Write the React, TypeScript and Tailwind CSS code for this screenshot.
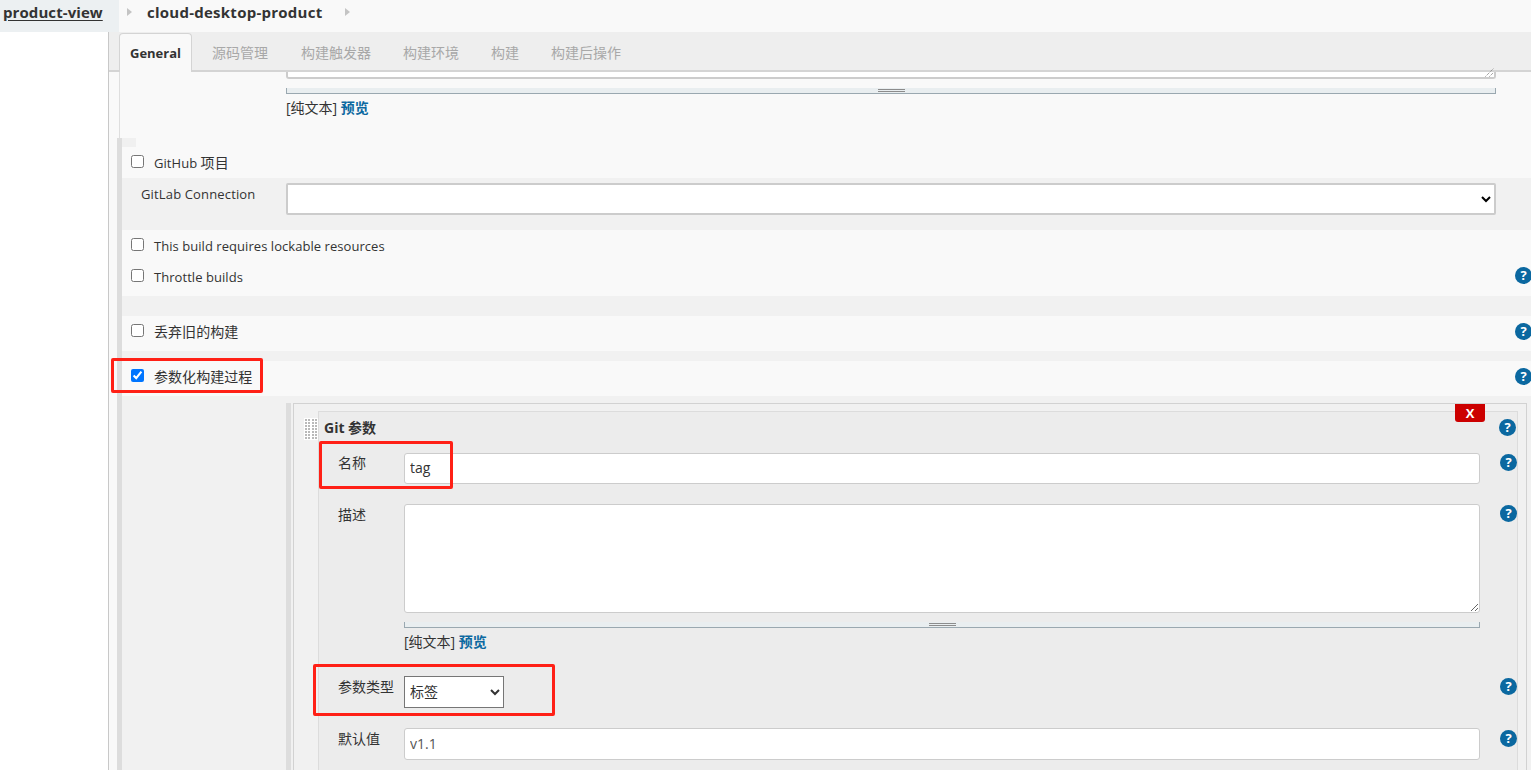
import React from "react";

const font = { fontFamily: '"Open Sans","Noto Sans","Noto Sans CJK SC",sans-serif' };

function Help() {
  return (
    <span className="flex h-[17px] w-[17px] shrink-0 items-center justify-center rounded-full bg-[#0b68a0] text-[13px] font-bold leading-none text-white">
      ?
    </span>
  );
}

function Caret() {
  return <span className="block h-0 w-0 border-y-[4px] border-l-[5px] border-y-transparent border-l-[#c4c4c4]" />;
}

function Resize() {
  return (
    <svg width="9" height="9" viewBox="0 0 9 9" className="absolute bottom-0 right-0">
      <path d="M0.5 8.5 L8.5 0.5 M4.5 8.5 L8.5 4.5" stroke="#777" strokeWidth="1" strokeDasharray="1 1" fill="none" />
    </svg>
  );
}

function CheckRow({
  label,
  checked,
  help,
  className,
  boxClass,
  helpClass,
}: {
  label: React.ReactNode;
  checked?: boolean;
  help?: boolean;
  className: string;
  boxClass: string;
  helpClass?: string;
}) {
  return (
    <div className={`flex items-center pl-[9px] ${className}`}>
      <input type="checkbox" readOnly checked={!!checked} className={`mx-0 mt-0 h-[13px] w-[13px] shrink-0 ${boxClass}`} />
      <span className="ml-[10px] text-[13px] leading-[20px] tracking-[0.05px] text-[#333]">{label}</span>
      {help && (
        <span className={`ml-auto mr-[-1px] ${helpClass ?? ""}`}>
          <Help />
        </span>
      )}
    </div>
  );
}

function Handle({ width }: { width: string }) {
  return (
    <div className={`relative flex h-[6px] justify-center border-x border-b border-x-[#9aa8b0] border-b-[#9aa8b0] bg-[#e9eef0] ${width}`}>
      <span className="mt-[1px] h-[3px] w-[27px] border-y border-y-[#8c8c8c]" />
    </div>
  );
}

function Editor() {
  return (
    <div className="text-[14px] leading-none text-[#333]">
      [纯文本] <span className="font-semibold text-[#0b68a0]">预览</span>
    </div>
  );
}

function Grip() {
  return (
    <div className="grid h-[22px] w-[14px] grid-cols-4 content-start gap-[1px] bg-white p-[1px]">
      {Array.from({ length: 28 }).map((_, i) => (
        <span key={i} className="h-[2px] w-[2px] bg-[#b9b9b9]" />
      ))}
    </div>
  );
}

function Tab({ children, className }: { children: React.ReactNode; className?: string }) {
  return <span className={`px-4 text-[14px] text-[#a8a8a8] ${className ?? ""}`}>{children}</span>;
}

export default function App() {
  return (
    <div className="relative flex h-[770px] w-full flex-col overflow-hidden bg-white" style={font}>
      <header className="flex h-[32px] shrink-0 items-center bg-[#f9f9f9]">
        <div className="flex h-full w-[119px] items-center bg-[#ecf0f2] pb-[8px] pl-[3px]">
          <span className="text-[15px] font-bold tracking-[0.08px] text-[#333] underline underline-offset-2">product-view</span>
        </div>
        <div className="flex h-full items-center pb-[8px]">
          <span className="ml-[8px]"><Caret /></span>
          <span className="ml-[15px] text-[15px] font-bold tracking-[0.25px] text-[#333]">cloud-desktop-product</span>
          <span className="ml-[23px]"><Caret /></span>
        </div>
      </header>

      <div className="flex min-h-0 flex-1">
        <aside className="w-[109px] shrink-0 border-r border-r-[#c8c8c8] bg-white" />
        <main className="flex min-w-0 flex-1 flex-col bg-[#f9f9f9]">
          <nav className="flex h-[40px] shrink-0 items-end border-b-2 border-b-[#d4d4d4] bg-[#eeeeee] pl-[10px]">
            <span className="mb-[-2px] flex h-[39px] w-[73px] items-center justify-center rounded-t-[4px] border border-b-0 border-[#d4d4d4] bg-[#f9f9f9] pt-[2px] text-[13px] font-bold text-[#333]">
              General
            </span>
            <div className="mb-[7px] ml-[4px] flex">
              <Tab className="mr-[1px]">源码管理</Tab>
              <Tab>构建触发器</Tab>
              <Tab>构建环境</Tab>
              <Tab>构建</Tab>
              <Tab>构建后操作</Tab>
            </div>
          </nav>

          <div className="ml-[10px] h-[66px] shrink-0 border-l border-l-[#dedede] pl-[166px]">
            <div className="relative h-[7px] w-[1210px] rounded-b-[3px] border-x-2 border-b-2 border-[#cccccc] bg-white">
              <Resize />
            </div>
            <div className="mt-[9px]">
              <Handle width="w-[1210px]" />
            </div>
            <div className="mt-[7px]">
              <Editor />
            </div>
          </div>

          <section className="ml-[8px] flex min-h-0 flex-1 flex-col border-l-[5px] border-l-[#dddddd]">
            <div className="h-[9px] w-[14px] shrink-0 bg-[#f0f0f0]" />
            <CheckRow label={<>GitHub <span className="text-[14px]">项目</span></>} boxClass="mb-[2px]" className="h-[31px] shrink-0" />
            <div className="flex h-[52px] shrink-0 bg-[#f1f1f1]">
              <span className="w-[164px] pl-[19px] pt-[6px] text-[13px] leading-[20px] tracking-[0.15px] text-[#333]">GitLab Connection</span>
              <select className="mt-[5px] h-[32px] w-[1210px] rounded-[2px] border-2 border-[#cccccc] bg-white" />
            </div>
            <CheckRow label="This build requires lockable resources" boxClass="mb-[4px]" className="h-[33px] shrink-0 pb-[1px]" />
            <CheckRow label="Throttle builds" boxClass="mb-[4px]" help helpClass="mb-[4px]" className="h-[33px] shrink-0 pb-[5px]" />
            <div className="h-[20px] shrink-0 bg-[#f1f1f1]" />
            <CheckRow label={<span className="text-[14px]">丢弃旧的构建</span>} boxClass="mb-[2px]" help className="h-[35px] shrink-0 pb-[4px]" />
            <div className="h-[10px] shrink-0 bg-[#f1f1f1]" />
            <CheckRow label={<span className="text-[14px]">参数化构建过程</span>} checked boxClass="mb-[2px]" help className="h-[35px] shrink-0 pb-[4px]" />

            <div className="min-h-0 flex-1 bg-[#f1f1f1] pl-[164px] pt-[7px]">
              <div className="h-[500px] border-l-[5px] border-l-[#dddddd] pl-[2px]">
                <div className="relative mr-[4px] h-full border border-[#d2d2d2] bg-[#f1f1f1] pl-[24px] pr-[8px] pt-[7px]">
                  <button className="absolute right-[41px] top-0 flex h-[18px] w-[30px] items-center justify-center rounded-b-[3px] bg-[#cc0000] text-[13px] font-bold leading-none text-white">
                    X
                  </button>
                  <div className="absolute left-[10px] top-[14px]">
                    <Grip />
                  </div>
                  <div className="h-full border border-[#dcdcdc] bg-[#ececec]">
                    <div className="flex h-[41px] items-start pl-[5px] pt-[5px]">
                      <span className="text-[14px] font-bold text-[#333]">Git 参数</span>
                      <span className="ml-auto mr-[1px] mt-[2px]"><Help /></span>
                    </div>

                    <div className="flex">
                      <span className="w-[85px] pl-[19px] text-[14px] leading-[20px] text-[#333]">名称</span>
                      <input readOnly value="tag" className="h-[31px] w-[1076px] rounded-[3px] border border-[#cccccc] bg-white px-[5px] pb-[2px] text-[14px] text-[#333]" />
                      <span className="ml-[20px] mt-[1px]"><Help /></span>
                    </div>

                    <div className="mt-[20px] flex">
                      <span className="w-[85px] pl-[19px] pt-[1px] text-[14px] leading-[20px] text-[#333]">描述</span>
                      <textarea readOnly className="h-[109px] w-[1076px] rounded-[3px] border border-[#cccccc] bg-white" />
                      <span className="ml-[20px] mt-[1px]"><Help /></span>
                    </div>
                    <div className="ml-[85px] mt-[9px]">
                      <Handle width="w-[1076px]" />
                    </div>
                    <div className="ml-[85px] mt-[7px]">
                      <Editor />
                    </div>

                    <div className="mt-[27px] flex">
                      <span className="w-[85px] pl-[19px] pt-[1px] text-[14px] leading-[20px] text-[#333]">参数类型</span>
                      <div className="w-[1076px]">
                        <select className="h-[32px] w-[100px] border border-[#767676] bg-white pb-[2px] pl-[1px] text-[14px] text-[#333]">
                          <option>标签</option>
                        </select>
                      </div>
                      <span className="ml-[20px] mt-[2px]"><Help /></span>
                    </div>

                    <div className="mt-[20px] flex">
                      <span className="w-[85px] pl-[19px] pt-[1px] text-[14px] leading-[20px] text-[#333]">默认值</span>
                      <input readOnly value="v1.1" className="h-[32px] w-[1076px] rounded-[3px] border border-[#cccccc] bg-white px-[5px] pb-[2px] text-[14px] text-[#555]" />
                      <span className="ml-[20px] mt-[2px]"><Help /></span>
                    </div>
                  </div>
                </div>
              </div>
            </div>
          </section>
        </main>
      </div>

      <div className="pointer-events-none absolute left-[111px] top-[358px] h-[35px] w-[152px] rounded-[2px] border-[3px] border-[#ff2016]" />
      <div className="pointer-events-none absolute left-[319px] top-[441px] h-[48px] w-[134px] rounded-[2px] border-[3px] border-[#ff2016]" />
      <div className="pointer-events-none absolute left-[313px] top-[664px] h-[52px] w-[242px] rounded-[2px] border-[3px] border-[#ff2016]" />
    </div>
  );
}
